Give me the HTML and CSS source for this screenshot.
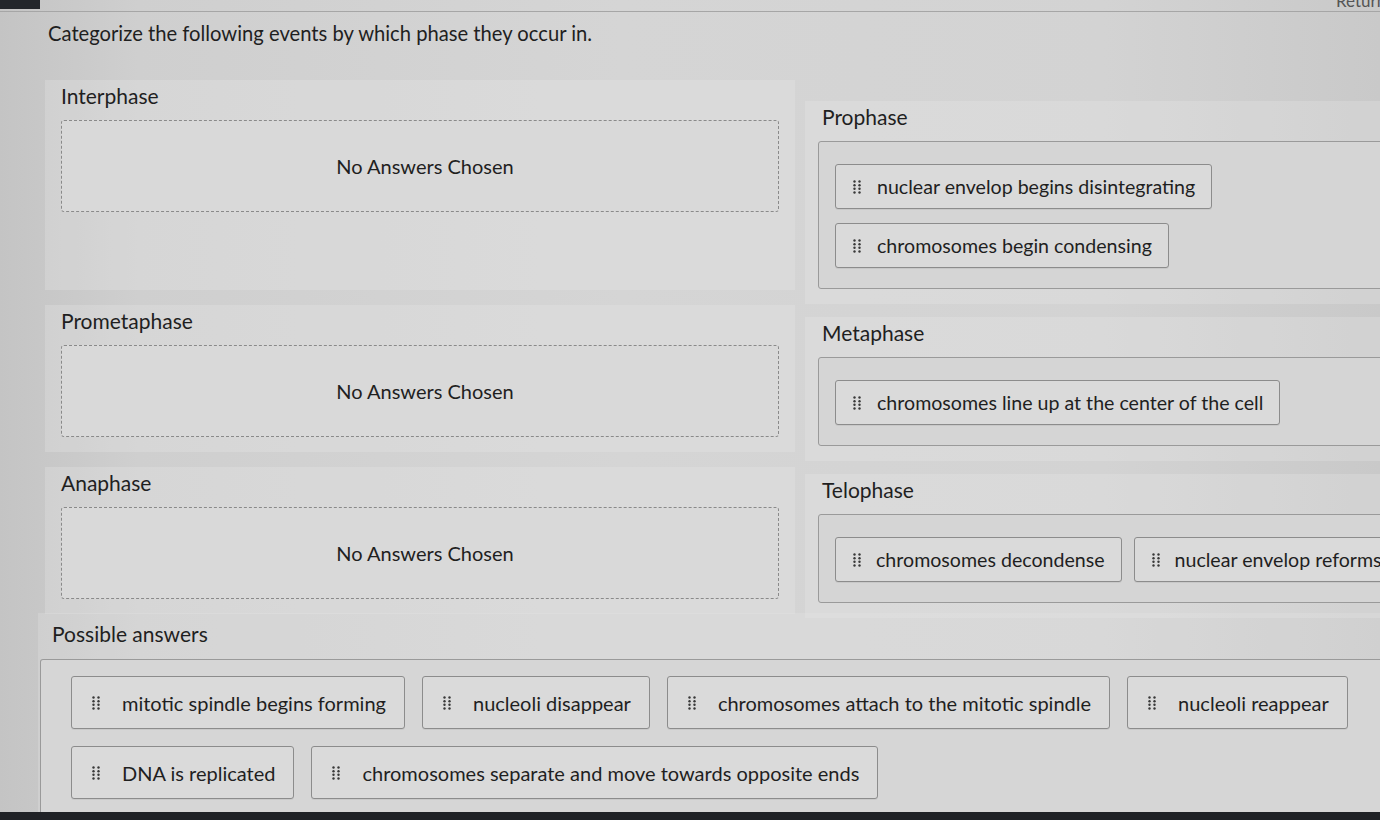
FILE: index.html
```html
<!DOCTYPE html>
<html lang="en">
<head>
<meta charset="utf-8">
<title>Categorize events</title>
<link rel="stylesheet" href="styles.css">
</head>
<body>
<div class="page">
  <header class="topbar">
    <div class="topbar-block"></div>
    <div class="topbar-return">Return</div>
  </header>

  <h1 class="prompt">Categorize the following events by which phase they occur in.</h1>

  <div class="columns">
    <div class="column column-left">
      <section class="cell cell-tall">
        <div class="cell-label">Interphase</div>
        <div class="dropzone dropzone-empty">No Answers Chosen</div>
      </section>
      <section class="cell">
        <div class="cell-label">Prometaphase</div>
        <div class="dropzone dropzone-empty">No Answers Chosen</div>
      </section>
      <section class="cell">
        <div class="cell-label">Anaphase</div>
        <div class="dropzone dropzone-empty">No Answers Chosen</div>
      </section>
    </div>

    <div class="column column-right">
      <section class="cell">
        <div class="cell-label">Prophase</div>
        <div class="dropzone dropzone-filled dropzone-stack">
          <div class="chip"><svg class="handle" viewBox="0 0 8 14" width="8" height="14"><g fill="#383838"><circle cx="1.5" cy="1.5" r="1.2"/><circle cx="6.5" cy="1.5" r="1.2"/><circle cx="1.5" cy="5.2" r="1.2"/><circle cx="6.5" cy="5.2" r="1.2"/><circle cx="1.5" cy="8.8" r="1.2"/><circle cx="6.5" cy="8.8" r="1.2"/><circle cx="1.5" cy="12.5" r="1.2"/><circle cx="6.5" cy="12.5" r="1.2"/></g></svg><span>nuclear envelop begins disintegrating</span></div>
          <div class="chip"><svg class="handle" viewBox="0 0 8 14" width="8" height="14"><g fill="#383838"><circle cx="1.5" cy="1.5" r="1.2"/><circle cx="6.5" cy="1.5" r="1.2"/><circle cx="1.5" cy="5.2" r="1.2"/><circle cx="6.5" cy="5.2" r="1.2"/><circle cx="1.5" cy="8.8" r="1.2"/><circle cx="6.5" cy="8.8" r="1.2"/><circle cx="1.5" cy="12.5" r="1.2"/><circle cx="6.5" cy="12.5" r="1.2"/></g></svg><span>chromosomes begin condensing</span></div>
        </div>
      </section>
      <section class="cell">
        <div class="cell-label">Metaphase</div>
        <div class="dropzone dropzone-filled">
          <div class="chip"><svg class="handle" viewBox="0 0 8 14" width="8" height="14"><g fill="#383838"><circle cx="1.5" cy="1.5" r="1.2"/><circle cx="6.5" cy="1.5" r="1.2"/><circle cx="1.5" cy="5.2" r="1.2"/><circle cx="6.5" cy="5.2" r="1.2"/><circle cx="1.5" cy="8.8" r="1.2"/><circle cx="6.5" cy="8.8" r="1.2"/><circle cx="1.5" cy="12.5" r="1.2"/><circle cx="6.5" cy="12.5" r="1.2"/></g></svg><span>chromosomes line up at the center of the cell</span></div>
        </div>
      </section>
      <section class="cell">
        <div class="cell-label">Telophase</div>
        <div class="dropzone dropzone-filled dropzone-row">
          <div class="chip"><svg class="handle" viewBox="0 0 8 14" width="8" height="14"><g fill="#383838"><circle cx="1.5" cy="1.5" r="1.2"/><circle cx="6.5" cy="1.5" r="1.2"/><circle cx="1.5" cy="5.2" r="1.2"/><circle cx="6.5" cy="5.2" r="1.2"/><circle cx="1.5" cy="8.8" r="1.2"/><circle cx="6.5" cy="8.8" r="1.2"/><circle cx="1.5" cy="12.5" r="1.2"/><circle cx="6.5" cy="12.5" r="1.2"/></g></svg><span>chromosomes decondense</span></div>
          <div class="chip"><svg class="handle" viewBox="0 0 8 14" width="8" height="14"><g fill="#383838"><circle cx="1.5" cy="1.5" r="1.2"/><circle cx="6.5" cy="1.5" r="1.2"/><circle cx="1.5" cy="5.2" r="1.2"/><circle cx="6.5" cy="5.2" r="1.2"/><circle cx="1.5" cy="8.8" r="1.2"/><circle cx="6.5" cy="8.8" r="1.2"/><circle cx="1.5" cy="12.5" r="1.2"/><circle cx="6.5" cy="12.5" r="1.2"/></g></svg><span>nuclear envelop reforms</span></div>
        </div>
      </section>
    </div>
  </div>

  <section class="answers">
    <div class="cell-label">Possible answers</div>
    <div class="answers-box">
      <div class="chip chip-answer"><svg class="handle" viewBox="0 0 8 14" width="8" height="14"><g fill="#383838"><circle cx="1.5" cy="1.5" r="1.2"/><circle cx="6.5" cy="1.5" r="1.2"/><circle cx="1.5" cy="5.2" r="1.2"/><circle cx="6.5" cy="5.2" r="1.2"/><circle cx="1.5" cy="8.8" r="1.2"/><circle cx="6.5" cy="8.8" r="1.2"/><circle cx="1.5" cy="12.5" r="1.2"/><circle cx="6.5" cy="12.5" r="1.2"/></g></svg><span>mitotic spindle begins forming</span></div>
      <div class="chip chip-answer"><svg class="handle" viewBox="0 0 8 14" width="8" height="14"><g fill="#383838"><circle cx="1.5" cy="1.5" r="1.2"/><circle cx="6.5" cy="1.5" r="1.2"/><circle cx="1.5" cy="5.2" r="1.2"/><circle cx="6.5" cy="5.2" r="1.2"/><circle cx="1.5" cy="8.8" r="1.2"/><circle cx="6.5" cy="8.8" r="1.2"/><circle cx="1.5" cy="12.5" r="1.2"/><circle cx="6.5" cy="12.5" r="1.2"/></g></svg><span>nucleoli disappear</span></div>
      <div class="chip chip-answer"><svg class="handle" viewBox="0 0 8 14" width="8" height="14"><g fill="#383838"><circle cx="1.5" cy="1.5" r="1.2"/><circle cx="6.5" cy="1.5" r="1.2"/><circle cx="1.5" cy="5.2" r="1.2"/><circle cx="6.5" cy="5.2" r="1.2"/><circle cx="1.5" cy="8.8" r="1.2"/><circle cx="6.5" cy="8.8" r="1.2"/><circle cx="1.5" cy="12.5" r="1.2"/><circle cx="6.5" cy="12.5" r="1.2"/></g></svg><span>chromosomes attach to the mitotic spindle</span></div>
      <div class="chip chip-answer"><svg class="handle" viewBox="0 0 8 14" width="8" height="14"><g fill="#383838"><circle cx="1.5" cy="1.5" r="1.2"/><circle cx="6.5" cy="1.5" r="1.2"/><circle cx="1.5" cy="5.2" r="1.2"/><circle cx="6.5" cy="5.2" r="1.2"/><circle cx="1.5" cy="8.8" r="1.2"/><circle cx="6.5" cy="8.8" r="1.2"/><circle cx="1.5" cy="12.5" r="1.2"/><circle cx="6.5" cy="12.5" r="1.2"/></g></svg><span>nucleoli reappear</span></div>
      <div class="chip chip-answer"><svg class="handle" viewBox="0 0 8 14" width="8" height="14"><g fill="#383838"><circle cx="1.5" cy="1.5" r="1.2"/><circle cx="6.5" cy="1.5" r="1.2"/><circle cx="1.5" cy="5.2" r="1.2"/><circle cx="6.5" cy="5.2" r="1.2"/><circle cx="1.5" cy="8.8" r="1.2"/><circle cx="6.5" cy="8.8" r="1.2"/><circle cx="1.5" cy="12.5" r="1.2"/><circle cx="6.5" cy="12.5" r="1.2"/></g></svg><span>DNA is replicated</span></div>
      <div class="chip chip-answer"><svg class="handle" viewBox="0 0 8 14" width="8" height="14"><g fill="#383838"><circle cx="1.5" cy="1.5" r="1.2"/><circle cx="6.5" cy="1.5" r="1.2"/><circle cx="1.5" cy="5.2" r="1.2"/><circle cx="6.5" cy="5.2" r="1.2"/><circle cx="1.5" cy="8.8" r="1.2"/><circle cx="6.5" cy="8.8" r="1.2"/><circle cx="1.5" cy="12.5" r="1.2"/><circle cx="6.5" cy="12.5" r="1.2"/></g></svg><span>chromosomes separate and move towards opposite ends</span></div>
    </div>
  </section>

  <footer class="bottom-band"></footer>
</div>
</body>
</html>
```

FILE: styles.css
```css
* { box-sizing: border-box; }

html, body {
  margin: 0;
  padding: 0;
}

body {
  width: 1380px;
  height: 820px;
  overflow: hidden;
  font-family: Lato, "Open Sans", "Liberation Sans", sans-serif;
  color: #1f1f1f;
  background: linear-gradient(90deg, #c4c4c4 0%, #cfcfcf 10%, #d5d5d5 45%, #d3d3d3 80%, #c9c9c9 100%);
}

.page {
  width: 1380px;
  height: 820px;
  display: flex;
  flex-direction: column;
}

.topbar {
  height: 12px;
  flex: none;
  display: flex;
  align-items: flex-start;
  border-bottom: 1px solid #a6a6a6;
}

.topbar-block {
  width: 40px;
  height: 9px;
  background: #23262b;
}

.topbar-return {
  margin-left: auto;
  width: 44px;
  white-space: nowrap;
  font-size: 17px;
  line-height: 16px;
  margin-top: -7px;
  color: #555;
}

.prompt {
  margin: 9px 0 0 48px;
  font-size: 20.2px;
  line-height: 24px;
  font-weight: 400;
  flex: none;
}

.columns {
  display: flex;
  gap: 10px;
  margin: 35px 0 0 45px;
  flex: none;
}

.column {
  display: flex;
  flex-direction: column;
  gap: 15px;
  flex: none;
}

.column-left { width: 750px; }
.column-right { width: 760px; padding-top: 21px; gap: 13px; }

.cell {
  background: rgba(232, 232, 232, 0.28);
  padding: 5px 0 15px 16px;
}

.column-right .cell { padding-left: 13px; }
.column-right .cell-label { padding-left: 4px; }

.cell-tall { min-height: 210px; }

.cell-label {
  font-size: 21px;
  line-height: 22px;
  margin-bottom: 13px;
}

.dropzone {
  border-radius: 3px;
}

.dropzone-empty {
  width: 718px;
  height: 92px;
  border: 1px dashed #8a8a8a;
  background: #d9d9d9;
  display: flex;
  align-items: center;
  justify-content: center;
  font-size: 20px;
  padding-left: 10px;
}

.dropzone-filled {
  border: 1px solid #9a9a9a;
  background: #d5d5d5;
  padding: 22px 16px 20px;
  display: flex;
  gap: 15px;
}

.dropzone-row { gap: 12px; }
.dropzone-row .chip { gap: 15px; }

.dropzone-stack {
  flex-direction: column;
  align-items: flex-start;
  gap: 14px;
}

.chip {
  flex: none;
  height: 45px;
  display: flex;
  align-items: center;
  gap: 16px;
  padding: 0 16px 0 17px;
  border: 1px solid #8c8c8c;
  border-radius: 3px;
  background: #dadada;
  font-size: 19.6px;
  white-space: nowrap;
  box-shadow: 0 1px 0 rgba(0,0,0,0.06);
}

.handle { flex: none; display: block; }

.answers {
  margin: -5px 0 0 38px;
  padding: 10px 0 0 14px;
  background: rgba(232, 232, 232, 0.25);
  flex: 1;
  min-height: 0;
  overflow: hidden;
}

.answers .cell-label { margin-bottom: 14px; }

.answers-box {
  margin-left: -12px;
  width: 1370px;
  border: 1px solid #9a9a9a;
  border-bottom: none;
  border-radius: 3px 0 0 0;
  background: #d6d6d6;
  padding: 16px 0 0 30px;
  display: flex;
  flex-wrap: wrap;
  align-content: flex-start;
  gap: 17px 17px;
  height: 160px;
}

.chip-answer {
  height: 53px;
  padding: 0 18px 0 20px;
  gap: 22px;
  font-size: 20px;
}

.bottom-band {
  height: 8px;
  background: #202226;
  flex: none;
}
```
